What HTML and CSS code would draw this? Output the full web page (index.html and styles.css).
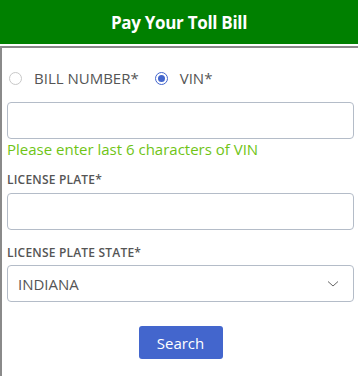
FILE: index.html
```html
<!DOCTYPE html>
<html>
<head>
<meta charset="utf-8">
<link rel="stylesheet" href="styles.css">
</head>
<body>
<div class="header">Pay Your Toll Bill</div>
<div class="panel">
  <div class="radios">
    <label class="radio"><span class="dot"></span><span>BILL NUMBER*</span></label>
    <label class="radio"><span class="dot on"></span><span>VIN*</span></label>
  </div>
  <div class="input"></div>
  <div class="hint">Please enter last 6 characters of VIN</div>
  <div class="label first">LICENSE PLATE*</div>
  <div class="input"></div>
  <div class="label second">LICENSE PLATE STATE*</div>
  <div class="input select">
    <span>INDIANA</span>
    <svg width="12" height="8" viewBox="0 0 12 8"><path d="M1 1.5 L6 6 L11 1.5" fill="none" stroke="#666" stroke-width="1"/></svg>
  </div>
  <div class="actions"><button class="btn">Search</button></div>
</div>
</body>
</html>
```
FILE: styles.css
```css
* { box-sizing: border-box; }
html, body { margin: 0; padding: 0; background: #fff; }
body { font-family: "Open Sans", "Noto Sans", sans-serif; width: 358px; height: 376px; overflow: hidden; }
.header {
  height: 44px;
  background: #008000;
  color: #fff;
  font-weight: 700;
  font-size: 17px;
  letter-spacing: -0.3px;
  display: flex;
  align-items: center;
  justify-content: center;
}
.panel {
  margin-top: 2px;
  border-top: 2px solid #8a8a8a;
  border-left: 2px solid #8a8a8a;
  padding: 18px 4px 40px 5px;
  height: 340px;
}
.radios { display: flex; align-items: center; gap: 16px; height: 24px; margin-bottom: 12px; padding-left: 2px; }
.radio { display: flex; align-items: center; gap: 12px; font-size: 15px; color: #555; }
.dot {
  width: 13px; height: 13px; border-radius: 50%;
  border: 1px solid #c8c8c8; background: #fff; display: inline-block; position: relative;
}
.dot.on { border-color: #4366cd; }
.dot.on::after {
  content: ""; position: absolute; left: 2px; top: 2px; width: 7px; height: 7px; border-radius: 50%; background: #4366cd;
}
.input {
  height: 37px;
  border: 1px solid #b4bcc8;
  border-radius: 4px;
  background: #fff;
}
.hint { color: #6fc416; font-size: 15px; margin-top: 0; line-height: 21px; }
.label { font-size: 12px; font-weight: 600; color: #555; line-height: 18px; letter-spacing: 0.2px; }
.label.first { margin-top: 11px; margin-bottom: 4px; }
.label.second { margin-top: 14px; margin-bottom: 3px; }
.select { display: flex; align-items: center; justify-content: space-between; padding: 0 14px 0 10px; font-size: 15px; color: #555; }
.actions { display: flex; justify-content: center; margin-top: 24px; }
.btn {
  font-family: inherit;
  width: 84px; height: 33px;
  background: #4366cd; color: #fff; border: none; border-radius: 3px;
  font-size: 15px;
}
```
